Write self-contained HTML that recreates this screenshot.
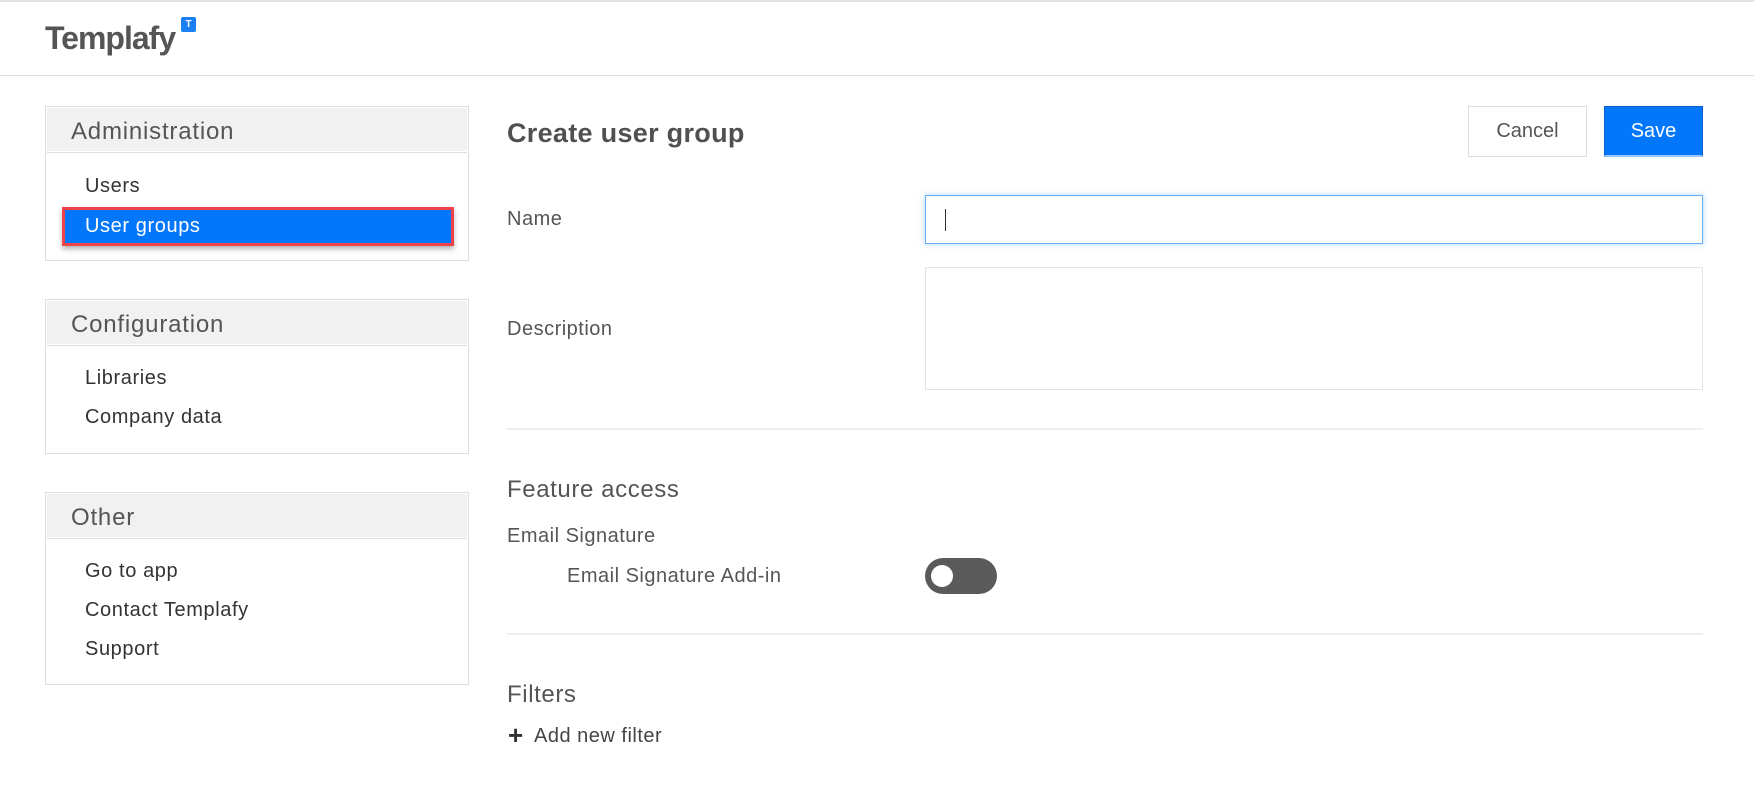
<!DOCTYPE html>
<html><head><meta charset="utf-8"><style>
*{box-sizing:border-box;margin:0;padding:0}
body{width:1754px;height:800px;background:#fff;font-family:"Liberation Sans",sans-serif;color:#444;position:relative;overflow:hidden}
.a{position:absolute}
.topline{left:0;top:0;width:1754px;height:2px;background:#e2e2e2}
.hdr{left:0;top:75px;width:1754px;height:1px;background:#ddd}
.logo{left:45px;top:20px;font-size:32px;font-weight:bold;color:#555;letter-spacing:-1px}
.badge{left:181px;top:17px;width:15px;height:15px;background:#1a7ff0;border-radius:2px;color:#fff;font-size:10px;font-weight:bold;text-align:center;line-height:15px}
.box{border:1px solid #ddd;left:45px;width:424px}
.bh{position:absolute;left:1px;right:1px;top:1px;height:43px;background:#f1f1f1}
.bh span{position:absolute;left:24px;top:10px;font-size:24px;color:#555;letter-spacing:.8px}
.sep{position:absolute;left:1px;right:1px;top:45px;height:1px;background:#ddd}
.it{position:absolute;left:39px;font-size:20px;color:#333;letter-spacing:.6px}
.sel{position:absolute;left:16px;top:100px;width:392px;height:39px;background:#0377fb;border:3px solid #f0424a;box-shadow:0 3px 5px rgba(0,0,0,.3)}
.sel span{position:absolute;left:20px;top:5px;font-size:20px;color:#fff;letter-spacing:.6px}
.lbl{font-size:20px;color:#555;letter-spacing:.5px}
</style></head><body>
<div class="a topline"></div>
<div class="a logo">Templafy</div>
<div class="a badge">T</div>
<div class="a hdr"></div>

<div class="a box" style="top:106px;height:155px">
 <div class="bh"><span>Administration</span></div><div class="sep"></div>
 <div class="it" style="top:68px">Users</div>
 <div class="sel"><span>User groups</span></div>
</div>
<div class="a box" style="top:299px;height:155px">
 <div class="bh"><span>Configuration</span></div><div class="sep"></div>
 <div class="it" style="top:67px">Libraries</div>
 <div class="it" style="top:106px">Company data</div>
</div>
<div class="a box" style="top:492px;height:193px">
 <div class="bh"><span>Other</span></div><div class="sep"></div>
 <div class="it" style="top:67px">Go to app</div>
 <div class="it" style="top:106px">Contact Templafy</div>
 <div class="it" style="top:145px">Support</div>
</div>

<div class="a" style="left:507px;top:118px;font-size:27px;color:#505050;font-weight:bold;letter-spacing:.3px">Create user group</div>
<div class="a" style="left:1468px;top:106px;width:119px;height:51px;border:1px solid #ddd;font-size:20px;color:#555;text-align:center;line-height:49px">Cancel</div>
<div class="a" style="left:1604px;top:106px;width:99px;height:51px;background:#0377fb;border:1px solid #0a5fd0;border-bottom:2px solid #9cc7f7;font-size:20px;color:#fff;text-align:center;line-height:49px">Save</div>

<div class="a lbl" style="left:507px;top:208px">Name</div>
<div class="a" style="left:925px;top:195px;width:778px;height:49px;border:1px solid #64aef5;box-shadow:0 0 6px rgba(100,174,245,.5)"><div style="position:absolute;left:19px;top:13px;width:1px;height:22px;background:#333"></div></div>
<div class="a lbl" style="left:507px;top:318px">Description</div>
<div class="a" style="left:925px;top:267px;width:778px;height:123px;border:1px solid #e3e3e3"></div>
<div class="a" style="left:507px;top:428px;width:1196px;height:2px;background:#eee"></div>

<div class="a" style="left:507px;top:476px;font-size:24px;color:#555;letter-spacing:.6px">Feature access</div>
<div class="a lbl" style="left:507px;top:525px">Email Signature</div>
<div class="a lbl" style="left:567px;top:565px">Email Signature Add-in</div>
<div class="a" style="left:925px;top:558px;width:72px;height:36px;border-radius:18px;background:#5a5a5a"><div style="position:absolute;left:6px;top:7px;width:22px;height:22px;border-radius:50%;background:#fff"></div></div>
<div class="a" style="left:507px;top:633px;width:1196px;height:2px;background:#eee"></div>

<div class="a" style="left:507px;top:681px;font-size:24px;color:#555;letter-spacing:.6px">Filters</div>
<div class="a" style="left:508px;top:720px;font-size:26px;font-weight:bold;color:#333">+</div>
<div class="a lbl" style="left:534px;top:725px;color:#444">Add new filter</div>
</body></html>
